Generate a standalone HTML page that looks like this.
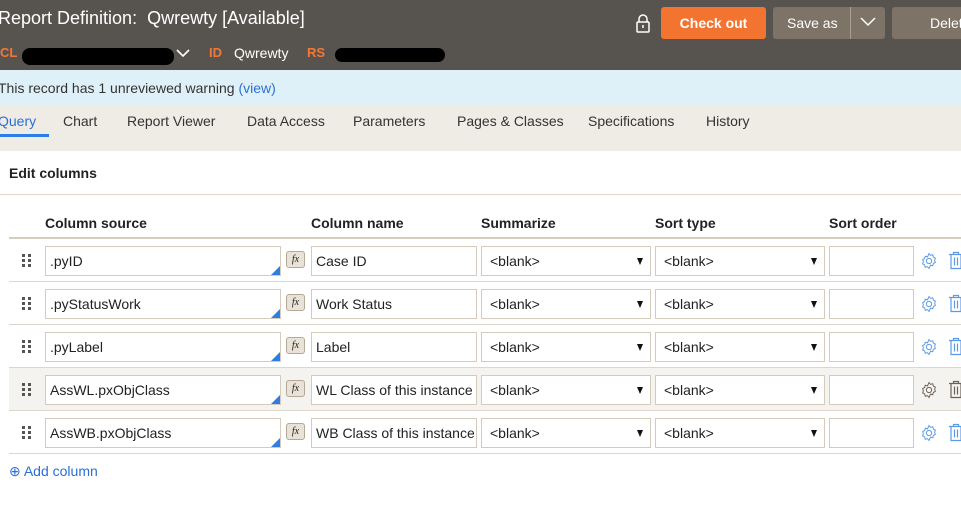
<!DOCTYPE html><html><head><style>
*{box-sizing:border-box;margin:0;padding:0}
body{width:961px;height:505px;overflow:hidden;background:#fff;font-family:"Liberation Sans",sans-serif;position:relative;color:#222}
.a{position:absolute;white-space:nowrap}
.hdr{left:0;top:0;width:961px;height:70px;background:#57544f}
.warn{left:0;top:70px;width:961px;height:35px;background:#dff1f8}
.tabs{left:0;top:105px;width:961px;height:46px;background:#efebe5}
.tab{top:113px;font-size:14px;color:#333}
.btn{top:7px;height:32px;border-radius:3px;color:#fff;font-size:14px;line-height:32px;text-align:center}
.inp{height:30px;border:1px solid #d5cbbd;background:#fff;font-size:14px;line-height:28px;padding-left:4px;overflow:hidden}
.tri{position:absolute;right:0;bottom:0;width:0;height:0;border-left:9px solid transparent;border-bottom:9px solid #2f7de1}
.sel:after{content:"";position:absolute;right:7px;top:11px;border-left:3.5px solid transparent;border-right:3.5px solid transparent;border-top:7px solid #111}
.fx{width:19px;height:17px;border:1px solid #b5a996;border-radius:3px;background:#e9e2d6;font:italic 10px "Liberation Serif",serif;text-align:center;line-height:15px}
.hl{height:1px;background:#ddd6cb}
.th{top:215px;font-size:14px;font-weight:bold}
</style></head><body>
<div class="a hdr"></div>
<div class="a" style="left:-2px;top:8px;font-size:18px;color:#fff">Report Definition:&nbsp; Qwrewty [Available]</div>
<div class="a" style="left:0;top:45px;font-size:13px;font-weight:bold;color:#f0793a">CL</div>
<div class="a" style="left:22px;top:48px;width:152px;height:17px;background:#000;border-radius:8px"></div>
<svg class="a" style="left:176px;top:48px" width="14" height="10"><path d="M1 2l6 6 6-6" stroke="#fff" stroke-width="1.6" fill="none"/></svg>
<div class="a" style="left:209px;top:45px;font-size:13px;font-weight:bold;color:#f0793a">ID</div>
<div class="a" style="left:234px;top:45px;font-size:14px;color:#fff">Qwrewty</div>
<div class="a" style="left:307px;top:45px;font-size:13px;font-weight:bold;color:#f0793a">RS</div>
<div class="a" style="left:335px;top:48px;width:110px;height:14px;background:#000;border-radius:7px"></div>
<svg class="a" style="left:635px;top:13px" width="16" height="20"><path d="M4 9V6a4 4 0 0 1 8 0v3" stroke="#fff" stroke-width="1.5" fill="none"/><rect x="2" y="9" width="12" height="10" rx="1" stroke="#fff" stroke-width="1.5" fill="none"/><path d="M8 12v3" stroke="#fff" stroke-width="1.5"/></svg>
<div class="a btn" style="left:661px;width:105px;background:#f37430;font-weight:bold">Check out</div>
<div class="a btn" style="left:773px;width:112px;background:#7d7366;text-align:left;padding-left:14px">Save as</div>
<div class="a" style="left:850px;top:7px;width:1px;height:32px;background:#a99e90"></div>
<svg class="a" style="left:860px;top:17px" width="16" height="10"><path d="M1 1l7 7 7-7" stroke="#fff" stroke-width="1.5" fill="none"/></svg>
<div class="a btn" style="left:892px;width:80px;background:#7d7366;text-align:left;padding-left:38px">Delete</div>
<div class="a warn"></div>
<div class="a" style="left:-2px;top:80px;font-size:14px;color:#333">This record has 1 unreviewed warning <span style="color:#2b6fd6">(view)</span></div>
<div class="a tabs"></div>
<div class="a tab" style="left:-2px;color:#2b6fd6">Query</div>
<div class="a" style="left:0;top:134px;width:49px;height:3px;background:#2b7de9"></div>
<div class="a tab" style="left:63px">Chart</div>
<div class="a tab" style="left:127px">Report Viewer</div>
<div class="a tab" style="left:247px">Data Access</div>
<div class="a tab" style="left:353px">Parameters</div>
<div class="a tab" style="left:457px">Pages &amp; Classes</div>
<div class="a tab" style="left:588px">Specifications</div>
<div class="a tab" style="left:706px">History</div>
<div class="a" style="left:9px;top:165px;font-size:14px;font-weight:bold">Edit columns</div>
<div class="a hl" style="left:0;top:194px;width:961px"></div>
<div class="a th" style="left:45px">Column source</div>
<div class="a th" style="left:311px">Column name</div>
<div class="a th" style="left:481px">Summarize</div>
<div class="a th" style="left:655px">Sort type</div>
<div class="a th" style="left:829px">Sort order</div>
<div class="a" style="left:9px;top:237px;width:952px;height:2px;background:#d6cdbf"></div>
<div id="rows"></div>
<div class="a" style="left:9px;top:463px;font-size:14px;color:#2b6fd6">⊕ Add column</div>
<script>
var d=[[".pyID","Case ID"],[".pyStatusWork","Work Status"],[".pyLabel","Label"],["AssWL.pxObjClass","WL Class of this instance"],["AssWB.pxObjClass","WB Class of this instance"]];
var h="";
d.forEach(function(r,i){var t=239+i*43,g=i==3,c=g?"#6b6359":"#5c9ae8";
if(g)h+='<div class="a" style="left:9px;top:'+t+'px;width:952px;height:43px;background:#f5f3ef"></div>';
var y=t+7;
h+='<svg class="a" style="left:22px;top:'+(t+15)+'px" width="10" height="14"><g fill="#555"><rect x="0" y="0" width="3" height="3"/><rect x="6" y="0" width="3" height="3"/><rect x="0" y="5" width="3" height="3"/><rect x="6" y="5" width="3" height="3"/><rect x="0" y="10" width="3" height="3"/><rect x="6" y="10" width="3" height="3"/></g></svg>';
h+='<div class="a inp" style="left:45px;top:'+y+'px;width:236px">'+r[0]+'<div class="tri"></div></div>';
h+='<div class="a fx" style="left:286px;top:'+(t+12)+'px">fx</div>';
h+='<div class="a inp" style="left:311px;top:'+y+'px;width:166px">'+r[1]+'</div>';
h+='<div class="a inp sel" style="left:481px;top:'+y+'px;width:170px;padding-left:8px">&lt;blank&gt;</div>';
h+='<div class="a inp sel" style="left:655px;top:'+y+'px;width:170px;padding-left:8px">&lt;blank&gt;</div>';
h+='<div class="a inp" style="left:829px;top:'+y+'px;width:85px"></div>';
h+='<svg class="a" style="left:920px;top:'+(t+13)+'px" width="18" height="18" viewBox="0 0 24 24"><path d="M12 2l2 2.5 3-.8.8 3 2.7 1.5-1 2.8 1 2.8-2.7 1.5-.8 3-3-.8L12 22l-2-2.5-3 .8-.8-3L3.5 15.8l1-2.8-1-2.8L6.2 8.7l.8-3 3 .8z" fill="none" stroke="'+c+'" stroke-width="1.3"/><circle cx="12" cy="12" r="3.5" fill="none" stroke="'+c+'" stroke-width="1.3"/></svg>';
h+='<svg class="a" style="left:948px;top:'+(t+12)+'px" width="16" height="19"><path d="M1 3.5h14M5.5 3V1.5h5V3M3 3.5v14h10v-14M6.5 6.5v8M9.5 6.5v8" fill="none" stroke="'+c+'" stroke-width="1.2"/></svg>';
h+='<div class="a hl" style="left:9px;top:'+(t+42)+'px;width:952px"></div>';});
document.getElementById("rows").innerHTML=h;
</script>
</body></html>
